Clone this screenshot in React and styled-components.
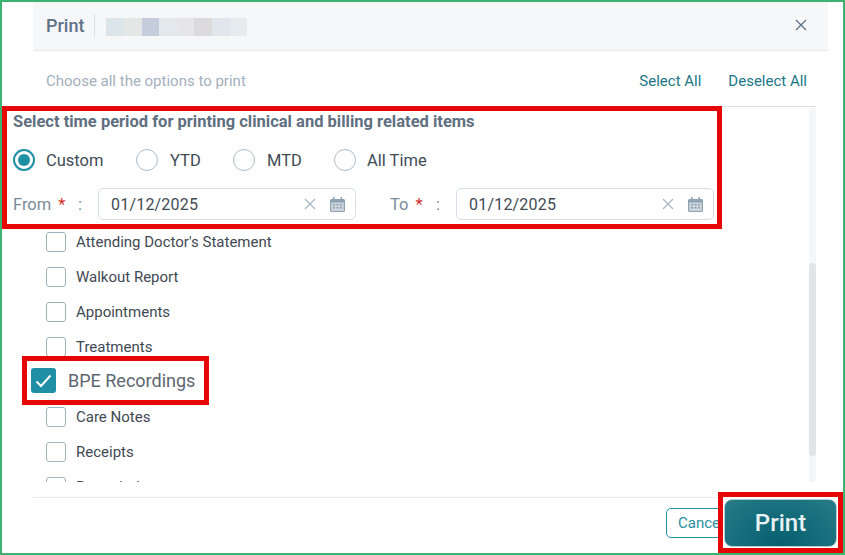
import { createGlobalStyle, styled } from "styled-components";

const GlobalStyle = createGlobalStyle`
  html, body {
    margin: 0;
    padding: 0;
    background: #fff;
  }
  * {
    box-sizing: border-box;
  }
`;

const Frame = styled.div`
  width: 845px;
  height: 555px;
  border: 2px solid #3cb371;
  background: #fff;
  font-family: Roboto, "Liberation Sans", sans-serif;
  overflow: hidden;
  display: flex;
  flex-direction: column;
`;

const Header = styled.div`
  height: 49px;
  margin: 0 15px 0 31px;
  padding: 0 21px 0 13px;
  flex-shrink: 0;
  background: #f6f7f9;
  border-bottom: 1px solid #e8ebef;
  display: flex;
  align-items: center;
`;

const HeaderTitle = styled.div`
  font-size: 18px;
  font-weight: 500;
  color: #5f7186;
  padding-right: 10px;
  margin-right: 11px;
  margin-bottom: 1px;
  line-height: 23px;
  border-right: 1px solid #d8dfe6;
`;

const BlurRow = styled.div`
  display: flex;
  flex: 1;
  margin-top: 2px;
`;

const BlurCell = styled.div`
  width: 17.6px;
  height: 18px;
  background: ${(p) => p.$color};
`;

const CloseButton = styled.div`
  width: 12px;
  height: 12px;
  margin-bottom: 2px;
  color: #5f7186;
  display: flex;
`;

const Toolbar = styled.div`
  height: 56px;
  margin: 0 27px 0 31px;
  padding: 5px 9px 0 13px;
  flex-shrink: 0;
  border-bottom: 1px solid #d9e0e9;
  display: flex;
  align-items: center;
  font-size: 15px;
`;

const Hint = styled.div`
  flex: 1;
  color: #a3b0bc;
`;

const LinkText = styled.span`
  color: #1b7685;
  margin-left: 27px;
`;

const Body = styled.div`
  height: 375px;
  flex-shrink: 0;
  display: flex;
  justify-content: space-between;
`;

const Main = styled.div`
  width: 720px;
`;

const PeriodBox = styled.div`
  height: 123px;
  margin-top: -1px;
  border: 5px solid #e60606;
  background: #fff;
  padding: 1px 6px 0 6px;
  position: relative;
`;

const PeriodTitle = styled.div`
  font-size: 16.5px;
  font-weight: 700;
  line-height: 20px;
  color: #5f6f80;
`;

const RadioRow = styled.div`
  display: flex;
  align-items: center;
  height: 22px;
  margin-top: 17px;
`;

const RadioItem = styled.div`
  display: flex;
  align-items: center;
  width: ${(p) => p.$width}px;
  font-size: 16.5px;
  color: #414b55;
`;

const RadioCircle = styled.div`
  width: 22px;
  height: 22px;
  border-radius: 50%;
  border: ${(p) => (p.$on ? "2px solid #1f8fa6" : "1.5px solid #aebdc9")};
  margin-right: ${(p) => p.$gap || 12}px;
  display: flex;
  align-items: center;
  justify-content: center;
  &::after {
    content: "";
    display: ${(p) => (p.$on ? "block" : "none")};
    width: 12px;
    height: 12px;
    border-radius: 50%;
    background: #1f8fa6;
  }
`;

const DateRow = styled.div`
  display: flex;
  align-items: center;
  height: 32px;
  margin-top: 17px;
`;

const DateLabel = styled.div`
  width: ${(p) => p.$width}px;
  font-size: 16.5px;
  color: #7a8a99;
  display: flex;
  flex-shrink: 0;
`;

const Star = styled.span`
  color: #d02c2c;
  margin-left: 7px;
`;

const Colon = styled.span`
  margin-left: auto;
  margin-right: ${(p) => p.$gap}px;
`;

const DateField = styled.div`
  width: 258px;
  height: 32px;
  flex-shrink: 0;
  border: 1px solid #d7e0ea;
  border-radius: 5px;
  padding: 0 10px 0 12px;
  display: flex;
  align-items: center;
  font-size: 16px;
  color: #414b55;
  margin-right: ${(p) => p.$gap || 0}px;
`;

const DateValue = styled.div`
  flex: 1;
  letter-spacing: 0.2px;
`;

const ClearIcon = styled.div`
  width: 12px;
  height: 12px;
  color: #a9b7c3;
  margin-right: 14px;
  display: flex;
`;

const CalendarIcon = styled.div`
  width: 15px;
  height: 15px;
  color: #8fa2b2;
  display: flex;
`;

const ListClip = styled.div`
  height: 253px;
  position: relative;
`;

const Items = styled.div`
  padding: 3px 0 0 44px;
`;

const Row = styled.div`
  height: 35px;
  display: flex;
  align-items: flex-start;
  position: relative;
  font-size: 15px;
  line-height: 21px;
  color: #3f4953;
`;

const LastRow = styled(Row)`
  height: 5px;
  overflow: hidden;
`;

const CheckBox = styled.div`
  width: 20px;
  height: 20px;
  flex-shrink: 0;
  border: 1px solid #9fb0be;
  border-radius: 3px;
  background: #fff;
  margin-right: 10px;
`;

const BpePatch = styled.div`
  position: absolute;
  left: -24px;
  top: -16px;
  width: 187px;
  height: 49px;
  border: 5px solid #e60606;
  background: #fff;
  display: flex;
  align-items: center;
  padding-left: 4px;
  font-size: 18px;
  color: #5d6670;
`;

const BigCheck = styled.div`
  width: 25px;
  height: 25px;
  border-radius: 3px;
  background: #1f8fa6;
  margin-right: 12px;
  color: #fff;
  display: flex;
  align-items: center;
  justify-content: center;
`;

const ScrollTrack = styled.div`
  width: 7px;
  height: 375px;
  margin-right: 27px;
  border-radius: 4px;
  background: #f5f6f8;
  padding-top: 156px;
`;

const ScrollThumb = styled.div`
  height: 193px;
  border-radius: 4px;
  background: #e1e4e8;
`;

const Footer = styled.div`
  margin: 15px 0 0 31px;
  flex: 1;
  border-top: 1px solid #e8ebef;
  position: relative;
`;

const CancelButton = styled.div`
  position: absolute;
  left: 633px;
  top: 10px;
  width: 90px;
  height: 30px;
  border: 1px solid #1f8fa6;
  border-radius: 5px;
  font-size: 15px;
  color: #2a8ea3;
  padding: 5px 0 0 11px;
`;

const PrintPatch = styled.div`
  position: absolute;
  left: 685px;
  top: -6px;
  width: 125px;
  height: 61px;
  border: 5px solid #e60606;
  background: #fff;
  padding: 2px 1px;
`;

const PrintButton = styled.div`
  width: 113px;
  height: 48px;
  border-radius: 8px;
  border: 1px solid #b5cfd4;
  background: radial-gradient(ellipse at 50% 100%, #06606f 0%, #186f7d 60%, #2a7b88 100%);
  color: #e8f1f3;
  font-size: 24px;
  font-weight: 500;
  display: flex;
  align-items: center;
  justify-content: center;
`;

const blurColors = [
  "#dbe5ea",
  "#e3e7e6",
  "#c5cddd",
  "#e4e9ee",
  "#e6e6ea",
  "#dcdadc",
  "#e0e6eb",
  "#e6ebef",
];

const items = ["Attending Doctor's Statement", "Walkout Report", "Appointments", "Treatments"];
const afterItems = ["Care Notes", "Receipts"];

const Cross = () => (
  <svg width="100%" height="100%" viewBox="0 0 12 12" fill="none" stroke="currentColor" strokeWidth="1.3">
    <path d="M1 1l10 10M11 1L1 11" />
  </svg>
);

const Calendar = () => (
  <svg width="100%" height="100%" viewBox="0 0 15 15" fill="currentColor">
    <path d="M3 0h1.5v2h6V0H12v2h1.5A1.5 1.5 0 0 1 15 3.5v10a1.5 1.5 0 0 1-1.5 1.5h-12A1.5 1.5 0 0 1 0 13.5v-10A1.5 1.5 0 0 1 1.5 2H3z" />
    <path fill="#fff" d="M1.2 5.5h12.6v8a.4.4 0 0 1-.4.4H1.6a.4.4 0 0 1-.4-.4z" opacity=".55" />
    <path d="M3 7h2v1.5H3zM6.5 7h2v1.5h-2zM10 7h2v1.5h-2zM3 10h2v1.5H3zM6.5 10h2v1.5h-2zM10 10h2v1.5h-2z" />
  </svg>
);

const DateInput = ({ gap }) => (
  <DateField $gap={gap}>
    <DateValue>01/12/2025</DateValue>
    <ClearIcon>
      <Cross />
    </ClearIcon>
    <CalendarIcon>
      <Calendar />
    </CalendarIcon>
  </DateField>
);

const App = () => {
  return (
    <>
      <GlobalStyle />
      <Frame>
        <Header>
          <HeaderTitle>Print</HeaderTitle>
          <BlurRow>
            {blurColors.map((c, i) => (
              <BlurCell key={i} $color={c} />
            ))}
          </BlurRow>
          <CloseButton>
            <Cross />
          </CloseButton>
        </Header>
        <Toolbar>
          <Hint>Choose all the options to print</Hint>
          <LinkText>Select All</LinkText>
          <LinkText>Deselect All</LinkText>
        </Toolbar>
        <Body>
          <Main>
            <PeriodBox>
              <PeriodTitle>Select time period for printing clinical and billing related items</PeriodTitle>
              <RadioRow>
                <RadioItem $width={123}>
                  <RadioCircle $on $gap={11} />
                  Custom
                </RadioItem>
                <RadioItem $width={97}>
                  <RadioCircle />
                  YTD
                </RadioItem>
                <RadioItem $width={101}>
                  <RadioCircle />
                  MTD
                </RadioItem>
                <RadioItem $width={120}>
                  <RadioCircle $gap={11} />
                  All Time
                </RadioItem>
              </RadioRow>
              <DateRow>
                <DateLabel $width={85}>
                  From<Star>*</Star>
                  <Colon $gap={16}>:</Colon>
                </DateLabel>
                <DateInput gap={34} />
                <DateLabel $width={66}>
                  To<Star>*</Star>
                  <Colon $gap={16}>:</Colon>
                </DateLabel>
                <DateInput />
              </DateRow>
            </PeriodBox>
            <ListClip>
              <Items>
                {items.map((label) => (
                  <Row key={label}>
                    <CheckBox />
                    {label}
                  </Row>
                ))}
                <Row>
                  <BpePatch>
                    <BigCheck>
                      <svg width="17" height="14" viewBox="0 0 17 14" fill="none" stroke="currentColor" strokeWidth="2">
                        <path d="M1.5 7.5l4.5 4.5L15.5 1.5" />
                      </svg>
                    </BigCheck>
                    BPE Recordings
                  </BpePatch>
                </Row>
                {afterItems.map((label) => (
                  <Row key={label}>
                    <CheckBox />
                    {label}
                  </Row>
                ))}
                <LastRow>
                  <CheckBox />
                  Prescriptions
                </LastRow>
              </Items>
            </ListClip>
          </Main>
          <ScrollTrack>
            <ScrollThumb />
          </ScrollTrack>
        </Body>
        <Footer>
          <CancelButton>Cancel</CancelButton>
          <PrintPatch>
            <PrintButton>Print</PrintButton>
          </PrintPatch>
        </Footer>
      </Frame>
    </>
  );
};

export default App;
